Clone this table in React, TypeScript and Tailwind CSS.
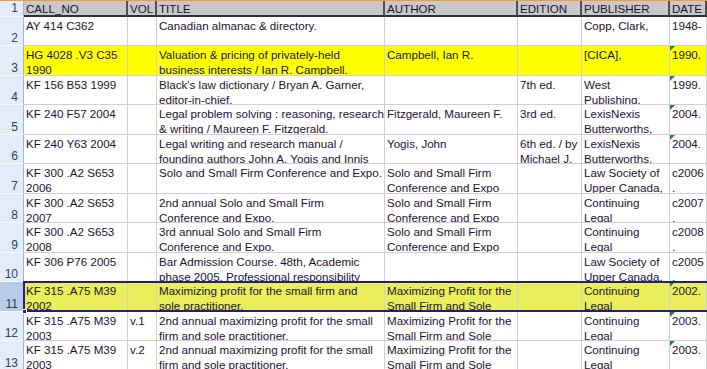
import React from "react";

type Row = {
  n: number;
  h: number;
  cells: string[][];
  fill?: "yellow" | "sel";
  tri?: boolean;
};

const widths = [24, 104, 29, 228, 133, 64, 88, 37];

const rows: Row[] = [
  { n: 2, h: 29, cells: [["AY 414 C362"], [], ["Canadian almanac & directory."], [], [], ["Copp, Clark,"], ["1948-"]] },
  { n: 3, h: 30, fill: "yellow", tri: true, cells: [["HG 4028 .V3 C35", "1990"], [], ["Valuation & pricing of privately-held", "business interests / Ian R. Campbell."], ["Campbell, Ian R."], [], ["[CICA],"], ["1990."]] },
  { n: 4, h: 29, tri: true, cells: [["KF 156 B53 1999"], [], ["Black's law dictionary / Bryan A. Garner,", "editor-in-chief."], [], ["7th ed."], ["West", "Publishing,"], ["1999."]] },
  { n: 5, h: 30, tri: true, cells: [["KF 240 F57 2004"], [], ["Legal problem solving : reasoning, research", "& writing / Maureen F. Fitzgerald."], ["Fitzgerald, Maureen F."], ["3rd ed."], ["LexisNexis", "Butterworths,"], ["2004."]] },
  { n: 6, h: 29, tri: true, cells: [["KF 240 Y63 2004"], [], ["Legal writing and research manual /", "founding authors John A. Yogis and Innis"], ["Yogis, John"], ["6th ed. / by", "Michael J."], ["LexisNexis", "Butterworths,"], ["2004."]] },
  { n: 7, h: 30, cells: [["KF 300 .A2 S653", "2006"], [], ["Solo and Small Firm Conference and Expo."], ["Solo and Small Firm", "Conference and Expo"], [], ["Law Society of", "Upper Canada,"], ["c2006", "."]] },
  { n: 8, h: 29, cells: [["KF 300 .A2 S653", "2007"], [], ["2nd annual Solo and Small Firm", "Conference and Expo."], ["Solo and Small Firm", "Conference and Expo"], [], ["Continuing", "Legal"], ["c2007", "."]] },
  { n: 9, h: 30, cells: [["KF 300 .A2 S653", "2008"], [], ["3rd annual Solo and Small Firm", "Conference and Expo."], ["Solo and Small Firm", "Conference and Expo"], [], ["Continuing", "Legal"], ["c2008", "."]] },
  { n: 10, h: 29, cells: [["KF 306 P76 2005"], [], ["Bar Admission Course. 48th, Academic", "phase 2005. Professional responsibility"], [], [], ["Law Society of", "Upper Canada,"], ["c2005", "."]] },
  { n: 11, h: 30, fill: "sel", tri: true, cells: [["KF 315 .A75 M39", "2002"], [], ["Maximizing profit for the small firm and", "sole practitioner."], ["Maximizing Profit for the", "Small Firm and Sole"], [], ["Continuing", "Legal"], ["2002."]] },
  { n: 12, h: 29, tri: true, cells: [["KF 315 .A75 M39", "2003"], ["v.1"], ["2nd annual maximizing profit for the small", "firm and sole practitioner."], ["Maximizing Profit for the", "Small Firm and Sole"], [], ["Continuing", "Legal"], ["2003."]] },
  { n: 13, h: 30, tri: true, cells: [["KF 315 .A75 M39", "2003"], ["v.2"], ["2nd annual maximizing profit for the small", "firm and sole practitioner."], ["Maximizing Profit for the", "Small Firm and Sole"], [], ["Continuing", "Legal"], ["2003."]] },
];

const headers = ["CALL_NO", "VOL", "TITLE", "AUTHOR", "EDITION", "PUBLISHER", "DATE"];

const font = { fontFamily: '"Liberation Sans", Arial, sans-serif' };

export default function App() {
  return (
    <div
      className="relative w-[707px] h-[369px] overflow-hidden bg-white text-[11.6px] leading-[15px] text-[#1c1230]"
      style={font}
    >
      {/* orange column-header bottom line */}
      <div className="h-[1px] bg-[#f29a3c]" />
      {/* header row */}
      <div className="flex h-[16px]">
        <div className="w-[24px] shrink-0 bg-[#e4ecf7] border-r border-[#9eb6ce] border-b border-b-[#f4f7fb] flex items-center justify-end pr-[5px] text-[12px] text-[#27415f]">
          1
        </div>
        {headers.map((h, i) => (
          <div
            key={h}
            className="shrink-0 bg-[#c8c8c8] border-r-2 border-r-[#505050] border-b-2 border-b-[#303030] pl-[2px] leading-[15px] overflow-hidden whitespace-nowrap"
            style={{ width: widths[i + 1] }}
          >
            {h}
          </div>
        ))}
      </div>
      {rows.map((r) => {
        const bg =
          r.fill === "yellow" ? "bg-[#ffff00]" : r.fill === "sel" ? "bg-[#e9ee5a]" : "bg-white";
        return (
          <div key={r.n} className="flex" style={{ height: r.h }}>
            <div
              className={
                "w-[24px] shrink-0 border-r border-[#9eb6ce] border-b border-b-[#f4f7fb] flex items-end justify-end pr-[5px] text-[12px] leading-[14px] text-[#27415f] " +
                (r.fill === "sel" ? "bg-[#b7cbe6]" : "bg-[#e4ecf7]")
              }
            >
              {r.n}
            </div>
            {r.cells.map((lines, i) => (
              <div
                key={i}
                className={
                  "relative shrink-0 overflow-hidden whitespace-nowrap border-r border-b border-[#d0d0d0] pl-[2px] pt-[1px] " +
                  bg
                }
                style={{ width: widths[i + 1] }}
              >
                {lines.map((l, j) => (
                  <div key={j}>{l}</div>
                ))}
                {i === 6 && r.tri && (
                  <div className="absolute left-0 top-0 w-0 h-0 border-t-[5px] border-t-[#1d8a2e] border-r-[5px] border-r-transparent" />
                )}
              </div>
            ))}
          </div>
        );
      })}
      {/* selection border for row 11 */}
      <div className="absolute left-[23px] right-0 top-[281px] h-[31px] border-2 border-[#1c1c8a] border-r-0 pointer-events-none" />
      <div className="absolute left-[22px] top-[309px] w-[5px] h-[5px] bg-[#1c1c8a] border border-white" />
    </div>
  );
}
